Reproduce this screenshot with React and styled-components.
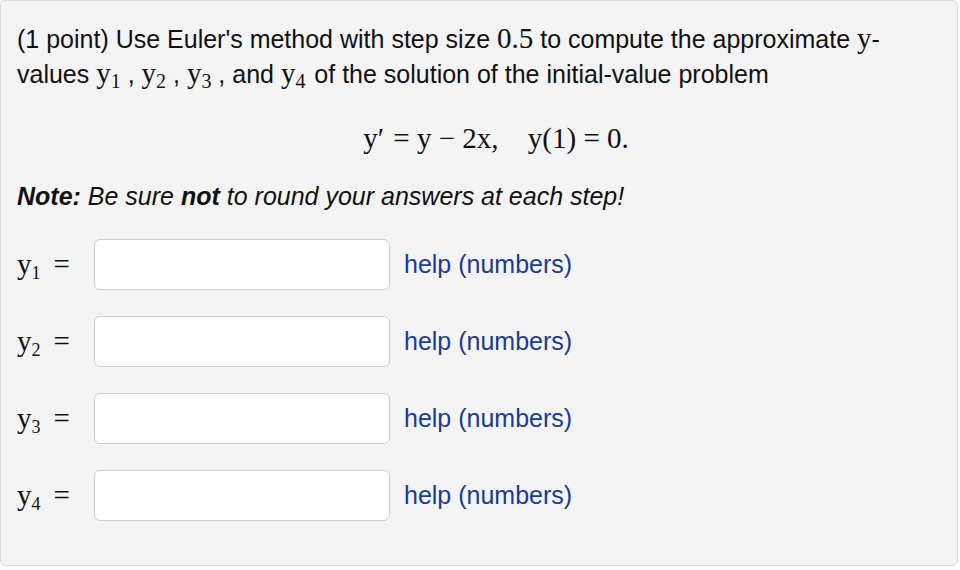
import React from 'react';
import styled, { createGlobalStyle } from 'styled-components';

const GlobalStyle = createGlobalStyle`
  html, body {
    margin: 0;
    padding: 0;
    background: #ffffff;
  }
`;

const Panel = styled.div`
  box-sizing: border-box;
  width: 958px;
  height: 566px;
  background: #f4f4f4;
  border: 1px solid #dcdcdc;
  border-radius: 5px;
  padding: 20px 16px 0 16px;
  font-family: 'Liberation Sans', Arial, sans-serif;
  font-size: 25px;
  color: #111;
`;

const Para = styled.p`
  margin: 0;
  line-height: 34px;
`;

const M = styled.span`
  font-family: 'Liberation Serif', 'Times New Roman', serif;
  font-size: 29px;
`;

const Sub = styled.span`
  font-size: ${(p) => (p.small ? 18 : 20)}px;
  position: relative;
  top: 5px;
`;

const Equation = styled.div`
  font-family: 'Liberation Serif', 'Times New Roman', serif;
  font-size: 29px;
  text-align: center;
  padding-left: 34px;
  margin-top: 28px;
  line-height: 34px;
`;

const Gap = styled.span`
  display: inline-block;
  width: ${(p) => p.w}px;
`;

const Note = styled.p`
  margin: 24px 0 0 0;
  font-style: italic;
  line-height: 34px;
`;

const Rows = styled.div`
  margin-top: 26px;
  display: flex;
  flex-direction: column;
  gap: 26px;
`;

const Row = styled.div`
  display: flex;
  align-items: center;
  height: 51px;
`;

const Label = styled.div`
  width: 77px;
  font-family: 'Liberation Serif', 'Times New Roman', serif;
  font-size: 29px;
  white-space: nowrap;
`;

const Eq = styled.span`
  margin-left: 13px;
`;

const Input = styled.input`
  box-sizing: border-box;
  width: 296px;
  height: 51px;
  background: #fff;
  border: 1px solid #cfcfcf;
  border-radius: 6px;
  outline: none;
  font-size: 20px;
  padding: 0 10px;
`;

const Help = styled.a`
  margin-left: 14px;
  color: #1b3b8f;
  text-decoration: none;
  font-size: 25px;
  cursor: pointer;
`;

function Y({ n }) {
  return (
    <M>
      y<Sub>{n}</Sub>
    </M>
  );
}

export default function App() {
  return (
    <>
      <GlobalStyle />
      <Panel>
        <Para>
          (1 point) Use Euler's method with step size <M>0.5</M> to compute the approximate <M>y</M>-
          <br />
          values <Y n={1} /> , <Y n={2} /> , <Y n={3} /> , and <Y n={4} /> <Gap w={2} />of the solution of the initial-value problem
        </Para>
        <Equation>
          y′ <Gap w={2} />= y − 2x, <Gap w={22} />y(1) = 0.
        </Equation>
        <Note>
          <b>Note:</b> Be sure <b>not</b> to round your answers at each step!
        </Note>
        <Rows>
          {[1, 2, 3, 4].map((n) => (
            <Row key={n}>
              <Label>
                y<Sub small>{n}</Sub>
                <Eq>=</Eq>
              </Label>
              <Input type="text" />
              <Help>help (numbers)</Help>
            </Row>
          ))}
        </Rows>
      </Panel>
    </>
  );
}
